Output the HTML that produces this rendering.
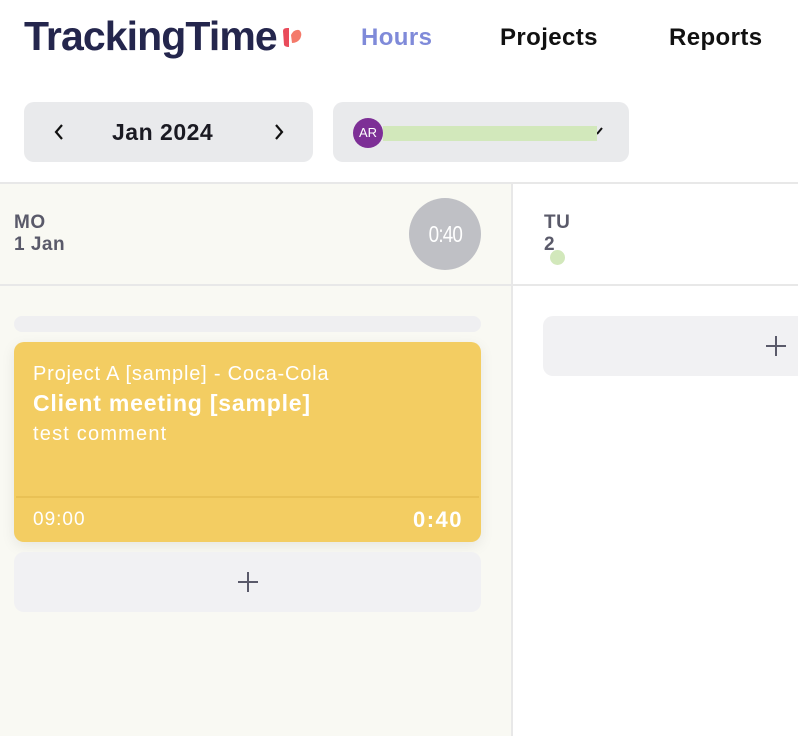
<!DOCTYPE html>
<html><head><style>
*{margin:0;padding:0;box-sizing:border-box}
body{width:798px;height:736px;overflow:hidden;background:#fff;font-family:"Liberation Sans",sans-serif;position:relative}
.a{position:absolute}
</style></head><body>
<div class="a" style="left:24px;top:13px;font-size:41px;font-weight:bold;color:#24264d;letter-spacing:-0.9px">TrackingTime</div>
<svg class="a" style="left:282px;top:27px" width="22" height="22"><path d="M1 4 Q1 1 5 1 L7 1 L7 20 Q3 20 2 18 Z" fill="#e94b5b"/><path d="M9 8 Q12 2 17 3 Q21 6 18 12 Q15 16 10 16 Z" fill="#f47a6a"/></svg>
<div class="a" style="left:361px;top:24px;font-size:24px;font-weight:bold;color:#7f8ad9;letter-spacing:0.4px">Hours</div>
<div class="a" style="left:500px;top:24px;font-size:24px;font-weight:bold;color:#111;letter-spacing:0.4px">Projects</div>
<div class="a" style="left:669px;top:24px;font-size:24px;font-weight:bold;color:#111;letter-spacing:0.4px">Reports</div>
<div class="a" style="left:24px;top:102px;width:289px;height:60px;background:#e9eaec;border-radius:10px"></div>
<svg class="a" style="left:52px;top:123px" width="14" height="18"><path d="M10 2 L4 9 L10 16" fill="none" stroke="#111" stroke-width="2.2"/></svg>
<svg class="a" style="left:272px;top:123px" width="14" height="18"><path d="M4 2 L10 9 L4 16" fill="none" stroke="#111" stroke-width="2.2"/></svg>
<div class="a" style="left:112px;top:119px;font-size:23px;font-weight:bold;color:#1a1a22;letter-spacing:0.5px">Jan 2024</div>
<div class="a" style="left:333px;top:102px;width:296px;height:60px;background:#e9eaec;border-radius:10px"></div>
<svg class="a" style="left:594px;top:126px" width="12" height="10"><path d="M3 8 L8 2" fill="none" stroke="#111" stroke-width="2"/></svg>
<div class="a" style="left:383px;top:126px;width:214px;height:15px;background:#d2e8bb"></div>
<div class="a" style="left:353px;top:118px;width:30px;height:30px;border-radius:50%;background:#7d2f96;color:#fff;font-size:13px;line-height:30px;text-align:center">AR</div>
<div class="a" style="left:0;top:182px;width:798px;height:2px;background:#e8e8e8"></div>
<div class="a" style="left:0;top:184px;width:511px;height:552px;background:#f9f9f3"></div>
<div class="a" style="left:511px;top:184px;width:2px;height:552px;background:#e8e8e8"></div>
<div class="a" style="left:0;top:284px;width:798px;height:2px;background:#e8e8e8"></div>
<div class="a" style="left:14px;top:212px;font-size:19px;font-weight:bold;color:#5a5a6a;line-height:22px;letter-spacing:0.5px">MO<br>1 Jan</div>
<div class="a" style="left:409px;top:198px;width:72px;height:72px;border-radius:50%;background:#bfc0c5;color:#fff;font-size:23px;line-height:72px;text-align:center;letter-spacing:-1px"><span style="display:inline-block;transform:scaleX(0.82)">0:40</span></div>
<div class="a" style="left:544px;top:212px;font-size:19px;font-weight:bold;color:#5a5a6a;line-height:22px;letter-spacing:0.5px">TU<br>2</div>
<div class="a" style="left:550px;top:250px;width:15px;height:15px;border-radius:50%;background:#d2e8bb"></div>
<div class="a" style="left:14px;top:316px;width:467px;height:16px;border-radius:8px;background:#efeff1"></div>
<div class="a" style="left:14px;top:342px;width:467px;height:200px;border-radius:10px;background:#f3cd62;box-shadow:0 4px 14px rgba(0,0,0,.08);color:#fff">
<div class="a" style="left:19px;top:21px;font-size:20px;letter-spacing:0.8px">Project A [sample] - Coca-Cola</div>
<div class="a" style="left:19px;top:48px;font-size:23px;font-weight:bold;letter-spacing:0.8px">Client meeting [sample]</div>
<div class="a" style="left:19px;top:81px;font-size:20px;letter-spacing:1.2px">test comment</div>
<div class="a" style="left:2px;top:154px;width:463px;height:2px;background:#e9c155"></div>
<div class="a" style="left:19px;top:167px;font-size:19px;letter-spacing:1px">09:00</div>
<div class="a" style="right:18px;top:165px;font-size:22px;font-weight:bold;letter-spacing:1.5px">0:40</div>
</div>
<div class="a" style="left:14px;top:552px;width:467px;height:60px;border-radius:10px;background:#f1f1f3"></div>
<svg class="a" style="left:237px;top:571px" width="22" height="22"><path d="M11 1 V21 M1 11 H21" stroke="#5a5a6a" stroke-width="2"/></svg>
<div class="a" style="left:543px;top:316px;width:270px;height:60px;border-radius:10px;background:#f1f1f3"></div>
<svg class="a" style="left:765px;top:335px" width="22" height="22"><path d="M11 1 V21 M1 11 H21" stroke="#5a5a6a" stroke-width="2"/></svg>
</body></html>
